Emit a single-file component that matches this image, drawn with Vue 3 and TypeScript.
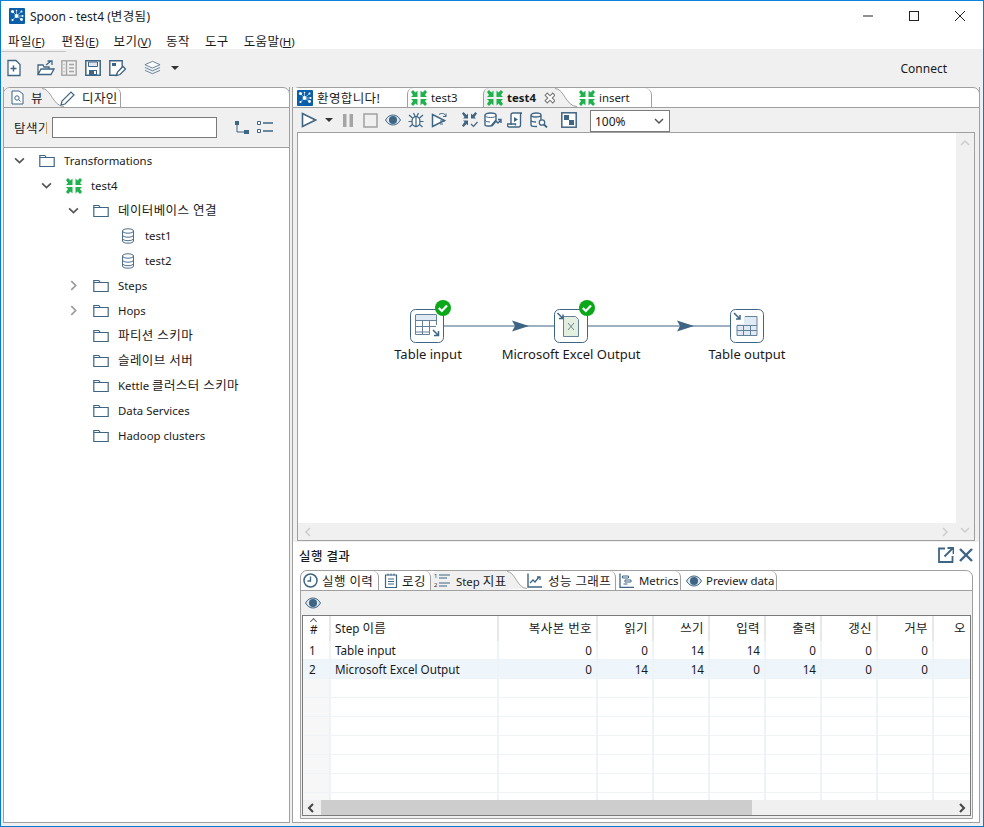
<script setup lang="ts">
interface TreeRow {
  label: string;
  depth: number;
  arrow?: "open" | "closed";
  icon: "folder" | "trans" | "db";
}

const menus = [
  { label: "파일", key: "F" },
  { label: "편집", key: "E" },
  { label: "보기", key: "V" },
  { label: "동작" },
  { label: "도구" },
  { label: "도움말", key: "H" },
];

const tree: TreeRow[] = [
  { label: "Transformations", depth: 0, arrow: "open", icon: "folder" },
  { label: "test4", depth: 1, arrow: "open", icon: "trans" },
  { label: "데이터베이스 연결", depth: 2, arrow: "open", icon: "folder" },
  { label: "test1", depth: 3, icon: "db" },
  { label: "test2", depth: 3, icon: "db" },
  { label: "Steps", depth: 2, arrow: "closed", icon: "folder" },
  { label: "Hops", depth: 2, arrow: "closed", icon: "folder" },
  { label: "파티션 스키마", depth: 2, icon: "folder" },
  { label: "슬레이브 서버", depth: 2, icon: "folder" },
  { label: "Kettle 클러스터 스키마", depth: 2, icon: "folder" },
  { label: "Data Services", depth: 2, icon: "folder" },
  { label: "Hadoop clusters", depth: 2, icon: "folder" },
];

const columns = ["복사본 번호", "읽기", "쓰기", "입력", "출력", "갱신", "거부", "오"];
const widths = [28, 168, 99, 56, 56, 56, 56, 56, 56, 38];
const rows = [
  { n: "1", name: "Table input", vals: ["0", "0", "14", "14", "0", "0", "0", ""] },
  { n: "2", name: "Microsoft Excel Output", vals: ["0", "14", "14", "0", "14", "0", "0", ""] },
];
const emptyRows = 7;

// hangul is set a bit larger than latin in the original ui font
const koParts = (s: string) => s.split(/([가-힣]+(?: [가-힣]+)*)/).filter(Boolean);
const isKo = (s: string) => /[가-힣]/.test(s);
</script>

<template>
  <div class="window">
    <svg class="defs" width="0" height="0">
      <defs>
        <symbol id="folder" viewBox="0 0 16 16">
          <path d="M.8 13.500V2.500h5l1.500 2h7.900v9z" fill="#fff" stroke="#3f6584" stroke-width="1.200" />
          <path d="M.8 4.500h6.500" fill="none" stroke="#3f6584" stroke-width="1" />
        </symbol>
        <symbol id="trans" viewBox="0 0 16 16">
          <g fill="#1fb14c">
            <path d="M0 2 2 0l2.500 2.500L6.500 .5v6.500H0l2-2z" />
            <path d="M16 2 14 0l-2.500 2.500L9.500 .5v6.500H16l-2-2z" />
            <path d="M0 14l2 2 2.500-2.500 2 2V9H0l2 2z" />
            <path d="M16 14l-2 2-2.500-2.500-2 2V9H16l-2 2z" />
          </g>
        </symbol>
        <symbol id="db" viewBox="0 0 16 16">
          <g fill="#fff" stroke="#4c6f8e" stroke-width="1">
            <path d="M2.500 3c0-1.300 2.500-2.200 5.500-2.200s5.500.9 5.500 2.200v10c0 1.300-2.500 2.200-5.500 2.200s-5.500-.9-5.500-2.200z" />
            <path d="M2.500 3c0 1.300 2.500 2.200 5.500 2.200s5.500-.9 5.500-2.200M2.500 7c0 1.300 2.500 2.200 5.500 2.200s5.500-.9 5.500-2.200M2.500 10.500c0 1.300 2.500 2.200 5.500 2.200s5.500-.9 5.500-2.200" fill="none" />
          </g>
        </symbol>
        <symbol id="logo" viewBox="0 0 16 16">
          <rect width="16" height="16" rx="1" fill="#0b5ea8" />
          <g stroke="#a9cbe8" stroke-width=".8">
            <path d="M7.500 8 3.500 3.500M7.500 8l5-4.500M7.500 8l-4 4M7.500 8l5 3.500M7.500 8h6M7.500 8V2.500" />
          </g>
          <g fill="#fff">
            <circle cx="7.500" cy="8" r="1.900" /><circle cx="3.500" cy="3.500" r="1.600" /><circle cx="12.500" cy="3.500" r="1" />
            <circle cx="13.500" cy="8" r="1" /><circle cx="3.500" cy="12" r="1.100" /><circle cx="12.500" cy="11.500" r="1.400" />
            <circle cx="7.500" cy="2.500" r=".8" />
          </g>
        </symbol>
        <symbol id="eye" viewBox="0 0 16 16">
          <path d="M.5 8C2.500 4.500 5 3 8 3s5.500 1.500 7.500 5c-2 3.500-4.500 5-7.500 5S2.500 11.500.5 8z" fill="#dfe7ee" stroke="#3f6584" />
          <circle cx="8" cy="8" r="4" fill="#3f6584" />
        </symbol>
        <symbol id="chev-down" viewBox="0 0 10 10">
          <path d="M1 3l4 4 4-4" fill="none" stroke="#555" stroke-width="1.500" />
        </symbol>
        <symbol id="chev-right" viewBox="0 0 10 10">
          <path d="M3 1l4 4-4 4" fill="none" stroke="#999" stroke-width="1.500" />
        </symbol>
        <symbol id="check" viewBox="0 0 16 16">
          <circle cx="8" cy="8" r="8" fill="#0aa818" />
          <path d="M3.800 8l3 3 5.200-5.500" fill="none" stroke="#fff" stroke-width="2.200" />
        </symbol>
      </defs>
    </svg>

    <header class="titlebar">
      <svg class="logo" width="16" height="16"><use href="#logo" /></svg>
      <span class="title">Spoon - test4 (<span class="ko">변경됨</span>)</span>
      <div class="winbtns">
        <svg width="46" height="29" viewBox="0 0 46 29"><path d="M18 15h10" stroke="#222" /></svg>
        <svg width="46" height="29" viewBox="0 0 46 29"><rect x="18.500" y="10.500" width="9" height="9" fill="none" stroke="#222" /></svg>
        <svg width="46" height="29" viewBox="0 0 46 29"><path d="M18 10l10 10M28 10 18 20" stroke="#222" /></svg>
      </div>
    </header>

    <nav class="menubar">
      <span v-for="m in menus" :key="m.label" class="menu"><span class="ko">{{ m.label }}</span><template v-if="m.key">(<u>{{ m.key }}</u>)</template></span>
    </nav>

    <div class="toolbar">
      <span class="menu-edge" />
      <svg width="14" height="18" viewBox="0 0 14 18" style="margin-left:6px">
        <path d="M1 1.500h8l4 4v11H1z" fill="#fff" stroke="#3f6584" stroke-width="1.300" />
        <path d="M3.500 9.500h6M6.500 6.500v6" stroke="#3f6584" stroke-width="1.500" />
      </svg>
      <svg width="18" height="16" viewBox="0 0 18 16" style="margin-left:16px">
        <path d="M1 14.500V5h5l1 2h5v2M1 14.500 4 9h13l-3 5.500z" fill="#fff" stroke="#3f6584" stroke-width="1.300" />
        <path d="M9 5l5-4M10.500 1H15v4" fill="none" stroke="#3f6584" stroke-width="1.300" />
      </svg>
      <svg width="16" height="16" viewBox="0 0 16 16" style="margin-left:6px">
        <rect x=".8" y=".8" width="14.400" height="14.400" fill="none" stroke="#a5a5a5" stroke-width="1.400" />
        <path d="M5.500 1v14M8 4.500h5M8 8h5M8 11.500h5M2.500 4.500h1M2.500 8h1M2.500 11.500h1" stroke="#a5a5a5" stroke-width="1.400" />
      </svg>
      <svg width="16" height="16" viewBox="0 0 16 16" style="margin-left:8px">
        <path d="M.8.8h14.400v14.400H.8z" fill="#fff" stroke="#3f6584" stroke-width="1.500" />
        <path d="M3.500 2h9v4.500h-9z" fill="#dfe7ee" stroke="#3f6584" />
        <path d="M4 10h8v5H4z" fill="#3f6584" />
        <path d="M9 11h2v3H9z" fill="#fff" />
      </svg>
      <svg width="17" height="17" viewBox="0 0 17 17" style="margin-left:8px">
        <path d="M.8.8h12.400v6l-6 8.400H.8z" fill="#fff" stroke="#3f6584" stroke-width="1.400" />
        <path d="M3 3h4v3H3z" fill="#3f6584" />
        <path d="M7.500 15.500l1-3.500 5.500-5.500 2.500 2.500-5.500 5.500z" fill="#fff" stroke="#3f6584" stroke-width="1.300" />
      </svg>
      <svg width="17" height="16" viewBox="0 0 18 16" style="margin-left:18px">
        <path d="M9 1l8 3.500L9 8 1 4.500z" fill="#fff" stroke="#5f7f9b" />
        <path d="M1 7.500 9 11l8-3.500M1 10.500 9 14l8-3.500" fill="none" stroke="#5f7f9b" />
      </svg>
      <span class="caret" />
      <span class="connect">Connect</span>
    </div>

    <div class="main">
      <aside class="left">
        <div class="tabstrip">
          <div class="tab tab-view">
            <svg width="13" height="15" viewBox="0 0 13 15">
              <path d="M1 1h7l4 3v10H1z" fill="#fff" stroke="#3f6584" />
              <circle cx="6" cy="8" r="2.200" fill="none" stroke="#3f6584" />
              <path d="M7.700 9.800 9.500 11.500" stroke="#3f6584" />
            </svg>
            <span class="ko">뷰</span>
          </div>
          <svg class="curve" width="22" height="19" viewBox="0 0 22 19">
            <path d="M0 0C9 0 11 18 22 18V19H0z" fill="#f0f0f0" />
            <path d="M0 .5C9 .5 11 18.500 22 18.500" fill="none" stroke="#a0a0a0" />
          </svg>
          <div class="tab tab-design">
            <svg width="16" height="16" viewBox="0 0 16 16">
              <path d="M1 15l1-4 9-9 3 3-9 9z" fill="#fff" stroke="#3f6584" stroke-width="1.200" />
            </svg>
            <span class="ko">디자인</span>
          </div>
        </div>
        <div class="search">
          <span class="search-label ko">탐색기</span>
          <input class="search-input" type="text" />
          <svg width="16" height="16" viewBox="0 0 16 16" class="s1">
            <path d="M3 5v7h8" fill="none" stroke="#3f6584" />
            <rect x="1" y="1" width="4" height="4" fill="#3f6584" /><rect x="10" y="10" width="5" height="4" fill="#3f6584" />
          </svg>
          <svg width="17" height="16" viewBox="0 0 17 16" class="s2">
            <path d="M1.500 1.500h3v3h-3zM1.500 9.500h3v3h-3z" fill="#fff" stroke="#3f6584" />
            <path d="M7 3h10M7 11h10" stroke="#3f6584" stroke-width="1.300" />
          </svg>
        </div>
        <div class="tree">
          <div
            v-for="t in tree"
            :key="t.label"
            class="tree-row"
            :style="{ paddingLeft: `${t.depth * 27 + 10}px` }"
          >
            <span class="arrow">
              <svg v-if="t.arrow === 'open'" width="11" height="11"><use href="#chev-down" /></svg>
              <svg v-if="t.arrow === 'closed'" width="11" height="11"><use href="#chev-right" /></svg>
            </span>
            <svg class="tree-icon" width="16" height="16"><use :href="`#${t.icon}`" /></svg>
            <span class="tree-label"><span v-for="p in koParts(t.label)" :key="p" :class="{ ko: isKo(p) }">{{ p }}</span></span>
          </div>
        </div>
      </aside>

      <section class="right">
        <div class="tabstrip graph-tabs">
          <div class="gtab g-welcome">
            <svg width="16" height="16"><use href="#logo" /></svg><span class="ko">환영합니다!</span>
          </div>
          <div class="gtab g-test3">
            <svg width="16" height="16"><use href="#trans" /></svg><span>test3</span>
          </div>
          <div class="gtab g-test4">
            <svg width="16" height="16"><use href="#trans" /></svg><b>test4</b>
            <svg class="close" width="12" height="12" viewBox="0 0 11 11">
              <path d="M1 3l2-2 2.500 2.500L8 1l2 2-2.500 2.500L10 8l-2 2-2.500-2.500L3 10 1 8l2.500-2.500z" fill="#fff" stroke="#777" />
            </svg>
          </div>
          <svg class="curve" width="22" height="19" viewBox="0 0 22 19">
            <path d="M0 0C9 0 11 18 22 18V19H0z" fill="#f0f0f0" />
            <path d="M0 .5C9 .5 11 18.500 22 18.500" fill="none" stroke="#a0a0a0" />
          </svg>
          <div class="gtab g-insert">
            <svg width="16" height="16"><use href="#trans" /></svg><span>insert</span>
          </div>
        </div>

        <div class="gtoolbar">
          <svg width="16" height="16" viewBox="0 0 16 16" style="margin-left:8px">
            <path d="M1.500 1.500v13l13-6.500z" fill="#fff" stroke="#3f6584" stroke-width="1.600" />
          </svg>
          <span class="caret small" />
          <svg width="12" height="15" viewBox="0 0 12 15" style="margin-left:9px">
            <path d="M1 1h3.500v13H1zM7.500 1H11v13H7.500z" fill="#a5a5a5" />
          </svg>
          <svg width="15" height="15" viewBox="0 0 15 15" style="margin-left:9px">
            <rect x="1" y="1" width="13" height="13" fill="none" stroke="#a5a5a5" stroke-width="1.600" />
          </svg>
          <svg width="16" height="16" style="margin-left:7px"><use href="#eye" /></svg>
          <svg width="16" height="16" viewBox="0 0 16 16" style="margin-left:7px">
            <ellipse cx="8" cy="9.500" rx="4" ry="5" fill="#fff" stroke="#3f6584" stroke-width="1.300" />
            <path d="M8 5v9M1 3l3.500 3M15 3l-3.500 3M.5 9.500H4M15.500 9.500H12M1.500 15l3-2.500M14.500 15l-3-2.500M5.500 1 7 4M10.500 1 9 4" stroke="#3f6584" stroke-width="1.200" />
          </svg>
          <svg width="17" height="16" viewBox="0 0 17 16" style="margin-left:7px">
            <path d="M1.500 2.500v12l12-6z" fill="#fff" stroke="#3f6584" stroke-width="1.500" />
            <path d="M8 2.500c3-2 6-1 7 2M15 1.500v3h-3M9 9h5M9 12h3" fill="none" stroke="#3f6584" />
          </svg>
          <svg width="16" height="16" viewBox="0 0 16 16" style="margin-left:14px">
            <g fill="#3f6584">
              <path d="M0 1.500 1.500 0l3 3L6 1.500V6.500H1L2.500 5z" /><path d="M15 1.500 13.500 0l-3 3L9 1.500V6.500h5L12.500 5z" />
              <path d="M0 13.500 1.500 15l3-3L6 13.500V8.500H1L2.500 10z" />
            </g>
            <path d="M9 12l2.500 2.500L15.500 10" fill="none" stroke="#3f6584" stroke-width="1.200" />
          </svg>
          <svg width="18" height="16" viewBox="0 0 18 16" style="margin-left:6px">
            <path d="M1 3c0-1.200 2.500-2 5.500-2s5.500.8 5.500 2v5l-5 6H3.500C2 14 1 13.500 1 13z" fill="#fff" stroke="#3f6584" stroke-width="1.400" />
            <path d="M1 3.500c0 1.200 2.500 2 5.500 2S12 4.700 12 3.500M1 8c0 1 2 2 5 2" fill="none" stroke="#3f6584" />
            <path d="M8 14l4-5 2 2 3-3M14 7.500h3V11" fill="none" stroke="#3f6584" stroke-width="1.400" />
          </svg>
          <svg width="17" height="16" viewBox="0 0 17 16" style="margin-left:5px">
            <path d="M4 13V3c0-1.200.8-2 2-2h9c-1 0-1.500.8-1.500 2v10c0 1.200-.8 2-2 2H2c-.8 0-1.500-.7-1.500-1.500V12h8v1.500" fill="#fff" stroke="#3f6584" stroke-width="1.400" />
            <path d="M7 5v5l4-2.500z" fill="#3f6584" />
          </svg>
          <svg width="18" height="16" viewBox="0 0 18 16" style="margin-left:6px">
            <path d="M1 3c0-1.200 2.500-2 5-2s5 .8 5 2v5M1 3v10c0 .8 2 1.500 5 1.500h1M1 3c0 1.200 2.500 2 5 2s5-.8 5-2M1 8c0 1 2 2 5 2" fill="#fff" stroke="#3f6584" stroke-width="1.400" />
            <circle cx="12" cy="10.500" r="2.700" fill="#fff" stroke="#3f6584" stroke-width="1.300" />
            <path d="M14 12.500l3 3" stroke="#3f6584" stroke-width="1.800" />
          </svg>
          <svg width="16" height="16" viewBox="0 0 16 16" style="margin-left:13px">
            <rect x=".8" y=".8" width="14.400" height="14.400" fill="#fff" stroke="#3f6584" stroke-width="1.500" />
            <path d="M3 3h5v5H3z" fill="#3f6584" /><path d="M8 8h5v5H8z" fill="#3f6584" />
          </svg>
          <div class="zoom-select">
            <span>100%</span>
            <svg width="10" height="10"><use href="#chev-down" /></svg>
          </div>
        </div>

        <div class="graph">
          <div class="canvas">
            <svg class="hops" width="660" height="391">
              <path d="M140 193H440" stroke="#3f6584" stroke-width="1.200" />
              <path d="M214 187.500l17 5.500-17 5.500 3-5.500z M379 187.500l17 5.500-17 5.500 3-5.500z" fill="#3f6584" />
            </svg>

            <div class="step" style="left: 112px; top: 176px">
              <svg width="34" height="34" viewBox="0 0 34 34">
                <rect x=".5" y=".5" width="33" height="33" rx="5" fill="#fff" stroke="#3f6584" />
                <path d="M6 6h21v6H6z" fill="#dfeaf5" />
                <path d="M26.500 6v10M6 5.500h20.500M5.500 5.500v20h14M6 11.500h20.500M6 17.500h20M6 23h14M12.500 12v13.500M19.500 12v13.500" fill="none" stroke="#64819a" />
                <path d="M23 21l5.500 5.500M28.500 22v4.500H24" fill="none" stroke="#3f6584" stroke-width="1.500" />
              </svg>
            </div>
            <svg class="badge" style="left: 137px; top: 167px" width="16" height="16"><use href="#check" /></svg>
            <span class="step-name" style="left: 95px; width: 70px">Table input</span>

            <div class="step" style="left: 256px; top: 176px">
              <svg width="34" height="34" viewBox="0 0 34 34">
                <rect x=".5" y=".5" width="33" height="33" rx="5" fill="#fff" stroke="#3f6584" />
                <path d="M9.500 7.500h12l3 3v17h-15z" fill="#e3f0df" stroke="#64819a" />
                <path d="M14 14l6 7M20 14l-6 7" stroke="#6f8290" />
                <path d="M3.500 4 9 9.500M9 5.500v4H5" fill="none" stroke="#3f6584" stroke-width="1.500" />
              </svg>
            </div>
            <svg class="badge" style="left: 281px; top: 167px" width="16" height="16"><use href="#check" /></svg>
            <span class="step-name" style="left: 199px; width: 148px">Microsoft Excel Output</span>

            <div class="step" style="left: 432px; top: 176px">
              <svg width="34" height="34" viewBox="0 0 34 34">
                <rect x=".5" y=".5" width="33" height="33" rx="5" fill="#fff" stroke="#3f6584" />
                <path d="M14 7h13v20H7V15h7z" fill="#dfeaf5" />
                <path d="M15 7.500h12v19H7v-10M7 16.500h20M7 21.500h20M13.500 16.500v10M20.500 16.500v10" fill="none" stroke="#64819a" />
                <path d="M4 4l6 6M10 6v4H6" fill="none" stroke="#3f6584" stroke-width="1.500" />
              </svg>
            </div>
            <span class="step-name" style="left: 409px; width: 80px">Table output</span>
          </div>
          <div class="vscroll">
            <svg width="10" height="10" viewBox="0 0 10 10"><path d="M1 7l4-4 4 4" fill="none" stroke="#ccc" stroke-width="1.500" /></svg>
            <svg width="10" height="10" viewBox="0 0 10 10"><path d="M1 3l4 4 4-4" fill="none" stroke="#ccc" stroke-width="1.500" /></svg>
          </div>
          <div class="hscroll">
            <svg width="10" height="10" viewBox="0 0 10 10"><path d="M7 1 3 5l4 4" fill="none" stroke="#ccc" stroke-width="1.500" /></svg>
            <svg width="10" height="10" viewBox="0 0 10 10"><path d="M3 1l4 4-4 4" fill="none" stroke="#ccc" stroke-width="1.500" /></svg>
          </div>
        </div>

        <div class="results">
          <div class="results-head">
            <span class="results-title ko">실행 결과</span>
            <svg width="16" height="16" viewBox="0 0 16 16">
              <path d="M7 1.500H1v13.500h13.500V9" fill="none" stroke="#3f6584" stroke-width="1.800" />
              <path d="M6.500 9.500 15 1M9.500 1H15.500V7" fill="none" stroke="#3f6584" stroke-width="1.800" />
            </svg>
            <svg class="x" width="14" height="14" viewBox="0 0 14 14">
              <path d="M1 1l12 12M13 1 1 13" stroke="#3f6584" stroke-width="2.400" />
            </svg>
          </div>

          <div class="rfolder">
            <div class="rtabs">
              <div class="rtab r-history">
                <svg width="15" height="15" viewBox="0 0 15 15"><circle cx="7.500" cy="7.500" r="6.500" fill="#fff" stroke="#3f6584" stroke-width="1.500" /><path d="M7.500 3.500v4.500H4.500" fill="none" stroke="#3f6584" stroke-width="1.300" /></svg>
                <span class="ko">실행 이력</span>
              </div>
              <div class="rtab r-log">
                <svg width="14" height="15" viewBox="0 0 14 15"><path d="M1.500 2h11v12.500h-11z" fill="#fff" stroke="#3f6584" stroke-width="1.200" /><path d="M4 .5v2M7 .5v2M10 .5v2M4 6h6M4 8.500h6M4 11h6" stroke="#3f6584" /></svg>
                <span class="ko">로깅</span>
              </div>
              <div class="rtab active">
                <svg width="17" height="15" viewBox="0 0 17 15"><path d="M5 2h11M5 5h8M5 10h11M5 13h8" stroke="#3f6584" /><text x="0" y="5" font-size="6" fill="#333">1</text><text x="0" y="14" font-size="6" fill="#333">2</text></svg>
                <span>Step <span class="ko">지표</span></span>
              </div>
              <svg class="curve" width="20" height="18" viewBox="0 0 22 19" preserveAspectRatio="none">
                <path d="M0 0C9 0 11 18 22 18V19H0z" fill="#f0f0f0" />
                <path d="M0 .5C9 .5 11 18.500 22 18.500" fill="none" stroke="#a0a0a0" />
              </svg>
              <div class="rtab r-perf">
                <svg width="15" height="15" viewBox="0 0 15 15"><path d="M1 .5v13.500h14" fill="none" stroke="#3f6584" stroke-width="1.400" /><path d="M3 10l3-3 2 2 4-5M10 4h3v3" fill="none" stroke="#3f6584" stroke-width="1.300" /></svg>
                <span class="ko">성능 그래프</span>
              </div>
              <div class="rtab r-metrics">
                <svg width="15" height="15" viewBox="0 0 15 15"><path d="M1 .5v14h14" fill="none" stroke="#3f6584" stroke-width="1.300" /><path d="M3.500 3h6v2h-6zM6 7h6v2H6zM4.500 11h4" fill="#fff" stroke="#3f6584" /></svg>
                <span>Metrics</span>
              </div>
              <div class="rtab r-preview">
                <svg width="16" height="16"><use href="#eye" /></svg>
                <span>Preview data</span>
              </div>
            </div>
            <div class="rtoolbar">
              <svg width="16" height="16"><use href="#eye" /></svg>
            </div>
            <div class="grid">
              <div class="grid-inner">
                <table>
                  <colgroup><col v-for="(w, i) in widths" :key="i" :style="{ width: `${w}px` }" /></colgroup>
                  <thead>
                    <tr>
                      <th class="num-head"><span class="sort" />#</th>
                      <th class="name">Step <span class="ko">이름</span></th>
                      <th v-for="c in columns" :key="c"><span class="ko">{{ c }}</span></th>
                    </tr>
                  </thead>
                  <tbody>
                    <tr v-for="(r, i) in rows" :key="r.n" :class="{ alt: i === 1 }">
                      <td class="num">{{ r.n }}</td>
                      <td class="name">{{ r.name }}</td>
                      <td v-for="(v, j) in r.vals" :key="j">{{ v }}</td>
                    </tr>
                    <tr v-for="e in emptyRows" :key="`e${e}`" class="empty">
                      <td class="num" /><td /><td /><td /><td /><td /><td /><td /><td /><td />
                    </tr>
                  </tbody>
                </table>
              </div>
              <div class="grid-scroll">
                <svg width="12" height="12" viewBox="0 0 12 12"><path d="M8 2 4 6l4 4" fill="none" stroke="#444" stroke-width="2" /></svg>
                <div class="track"><div class="thumb" /></div>
                <svg width="12" height="12" viewBox="0 0 12 12"><path d="M4 2l4 4-4 4" fill="none" stroke="#444" stroke-width="2" /></svg>
              </div>
            </div>
          </div>
        </div>
      </section>
    </div>
  </div>
</template>

<style>
html,
body {
  margin: 0;
  background: #f0f0f0;
}
</style>

<style scoped>
* {
  box-sizing: border-box;
}
.window {
  width: 984px;
  height: 827px;
  border: 1px solid #0a7ad1;
  border-top-color: #0a84dc;
  background: #f0f0f0;
  display: flex;
  flex-direction: column;
  font-family: "Noto Sans", "Noto Sans CJK KR", sans-serif;
  font-size: 11.4px;
  color: #1a1a1a;
  overflow: hidden;
}
.ko {
  font-size: 12.5px;
  letter-spacing: 0.4px;
}
.defs {
  position: absolute;
}
svg {
  flex: none;
  display: block;
}

.titlebar {
  height: 29px;
  background: #fff;
  display: flex;
  align-items: center;
  flex: none;
}
.logo {
  margin-left: 8px;
}
.title {
  margin-left: 5px;
  font-size: 12px;
}
.winbtns {
  margin-left: auto;
  display: flex;
}

.menubar {
  height: 19px;
  background: #fff;
  display: flex;
  align-items: center;
  gap: 15px;
  padding: 2px 0 0 7px;
  flex: none;
}
.menu:first-child {
  margin-right: 2px;
}
.toolbar {
  height: 36px;
  display: flex;
  align-items: center;
  flex: none;
  position: relative;
  background: #f0f0f0;
  padding-top: 2px;
}
.menu-edge {
  position: absolute;
  left: 0;
  top: 2px;
  width: 65px;
  height: 1px;
  background: #c4c4c4;
}
.caret {
  width: 0;
  height: 0;
  border: 4px solid transparent;
  border-top: 4px solid #333;
  border-bottom: 0;
  margin-left: 10px;
}
.caret.small {
  margin-left: 8px;
}
.connect {
  margin-left: auto;
  margin-right: 36px;
  font-size: 12px;
}

.main {
  flex: 1;
  display: flex;
  gap: 2px;
  padding: 2px 3px 3px 2px;
  min-height: 0;
}
.left {
  width: 287px;
  flex: none;
  border: 1px solid #a0a0a0;
  border-top: 0;
  display: flex;
  flex-direction: column;
  background: #f0f0f0;
}
.tabstrip {
  height: 21px;
  display: flex;
  background: #fff;
  border: 1px solid #a0a0a0;
  border-radius: 7px 7px 0 0;
  flex: none;
  margin: 0 0 0 -1px;
  width: calc(100% + 2px);
}
.curve {
  margin-right: -22px;
  position: relative;
  z-index: 1;
}
.tab {
  display: flex;
  align-items: center;
  gap: 7px;
  height: 19px;
}
.tab-view {
  width: 38px;
  padding-left: 7px;
  background: #f0f0f0;
  border-radius: 6px 0 0 0;
}
.tab-design {
  margin-left: 18px;
  padding-left: 0;
  padding-right: 2px;
  border-right: 1px solid #a0a0a0;
  border-radius: 0 6px 0 0;
  gap: 6px;
  position: relative;
  z-index: 2;
}
.search {
  height: 40px;
  display: flex;
  align-items: center;
  padding-left: 10px;
  border-bottom: 1px solid #a0a0a0;
  flex: none;
}
.search-label {
  width: 33px;
  margin-right: 5px;
  overflow: hidden;
  white-space: nowrap;
  flex: none;
}
.search-input {
  width: 165px;
  height: 21px;
  border: 1px solid #7a7a7a;
  background: #fff;
  padding: 0;
  flex: none;
}
.s1 {
  margin-left: 17px;
}
.s2 {
  margin-left: 6px;
}
.tree {
  flex: 1;
  background: #fff;
}
.tree-row {
  height: 25px;
  display: flex;
  align-items: center;
}
.arrow {
  width: 11px;
  height: 11px;
  flex: none;
}
.tree-icon {
  margin-left: 14px;
  margin-right: 9px;
}
.tree-label {
  line-height: 16px;
}

.right {
  flex: 1;
  min-width: 0;
  display: flex;
  flex-direction: column;
  border: 1px solid #a0a0a0;
  border-top: 0;
  min-height: 0;
}
.graph-tabs {
  align-items: stretch;
}
.gtab {
  display: flex;
  align-items: center;
  gap: 4px;
  height: 19px;
  border-right: 1px solid #a0a0a0;
  border-radius: 0 7px 0 0;
}
.gtab svg {
  margin-left: 3px;
}
.g-welcome {
  width: 114px;
  border-right: 0;
  background: #fff;
}
.g-welcome svg {
  margin-left: 4px;
}
.g-test3 {
  width: 76px;
  border-left: 1px solid #a0a0a0;
  border-radius: 6px 0 0 0;
  border-right: 0;
}
.g-test4 {
  width: 72px;
  background: #f0f0f0;
  border-left: 1px solid #a0a0a0;
  border-right: 0;
  border-radius: 6px 0 0 0;
}
.g-test4 .close {
  margin-left: 4px;
}
.g-insert {
  width: 76px;
  margin-left: 21px;
  padding-left: 0;
  position: relative;
  z-index: 2;
}
.gtoolbar {
  height: 24px;
  display: flex;
  align-items: center;
  flex: none;
}
.zoom-select {
  margin-left: 13px;
  margin-top: 2px;
  width: 80px;
  height: 22px;
  background: #fff;
  border: 1px solid #7a7a7a;
  display: flex;
  align-items: center;
  justify-content: space-between;
  padding: 0 5px 0 4px;
  font-size: 12px;
}
.graph {
  height: 409px;
  margin: 0 4px;
  border: 1px solid #a0a0a0;
  display: grid;
  grid-template-columns: 1fr 18px;
  grid-template-rows: 1fr 17px;
  flex: none;
}
.canvas {
  position: relative;
  background: #fff;
  overflow: hidden;
}
.hops {
  position: absolute;
  left: 0;
  top: 0;
}
.step {
  position: absolute;
}
.badge {
  position: absolute;
}
.step-name {
  position: absolute;
  top: 212px;
  text-align: center;
  white-space: nowrap;
  font-size: 13px;
  line-height: 18px;
}
.vscroll {
  grid-row: 1 / 3;
  grid-column: 2;
  display: flex;
  flex-direction: column;
  justify-content: space-between;
  align-items: center;
  padding: 5px 0;
}
.hscroll {
  display: flex;
  align-items: center;
  justify-content: space-between;
  padding: 0 6px 0 5px;
}

.results {
  flex: 1;
  min-height: 0;
  display: flex;
  flex-direction: column;
  background: #fff;
  margin: 1px 0 0;
  padding: 0 6px 3px 6px;
}
.results-head {
  height: 28px;
  display: flex;
  align-items: center;
  flex: none;
  padding-bottom: 3px;
}
.results-title {
  margin-right: auto;
  margin-top: 1px;
  font-weight: 500;
}
.results-head .x {
  margin-left: 5px;
  margin-right: 0;
}
.rfolder {
  flex: 1;
  min-height: 0;
  border: 1px solid #a0a0a0;
  border-radius: 7px 7px 0 0;
  display: flex;
  flex-direction: column;
  background: #f0f0f0;
  padding: 0 1px 1px 1px;
  margin-left: 1px;
}
.rtabs {
  height: 20px;
  display: flex;
  background: #fff;
  border-bottom: 1px solid #a0a0a0;
  margin: 0 -1px;
  border-radius: 7px 7px 0 0;
  flex: none;
}
.rtab {
  display: flex;
  align-items: center;
  gap: 4px;
  padding: 0 0 0 2px;
  border-right: 1px solid #a0a0a0;
  border-radius: 0 6px 0 0;
  white-space: nowrap;
  position: relative;
  z-index: 2;
}
.r-history {
  width: 78px;
}
.r-log {
  width: 52px;
  padding-left: 5px;
  gap: 4px;
}
.rtab.active {
  width: 76px;
  background: #f0f0f0;
  border-right: 0;
  border-radius: 6px 0 0 0;
  z-index: 0;
  padding-left: 3px;
  gap: 5px;
}
.rtab.r-perf {
  width: 89px;
  margin-left: 22px;
  padding-left: 0;
  gap: 6px;
}
.r-metrics {
  width: 65px;
  padding-left: 3px;
  gap: 5px;
}
.r-preview {
  width: 96px;
  padding-left: 5px;
}
.rtoolbar {
  height: 24px;
  display: flex;
  align-items: center;
  padding-left: 3px;
  flex: none;
}
.grid {
  flex: 1;
  min-height: 0;
  border: 1px solid #7a7a7a;
  background: #fff;
  margin-bottom: 1px;
  display: flex;
  flex-direction: column;
}
.grid-inner {
  flex: 1;
  min-height: 0;
  overflow: hidden;
}
table {
  border-collapse: separate;
  border-spacing: 0;
  table-layout: fixed;
  width: 669px;
}
th,
td {
  padding: 0 4px;
  font-weight: 400;
  text-align: right;
  height: 19px;
  border-right: 2px solid #eef3f8;
  border-bottom: 1px solid #eef3f8;
  white-space: nowrap;
  overflow: hidden;
  font-size: 11.7px;
}
th {
  height: 25px;
  border-bottom: 0;
  border-right-color: #e8e8e8;
  padding-bottom: 3px;
}
.name {
  text-align: left;
}
.num,
.num-head {
  text-align: left;
  padding-left: 6px;
}
.empty .num {
  background: #f7f7f7;
}
.num-head {
  background: #fff;
  position: relative;
  padding-left: 7px;
  padding-top: 3px;
  padding-bottom: 2px;
}
.sort {
  position: absolute;
  left: 8px;
  top: 3px;
  width: 5px;
  height: 5px;
  border-left: 1px solid #666;
  border-top: 1px solid #666;
  transform: rotate(45deg);
}
.alt td {
  background: #eef6fc;
}
.grid-scroll {
  height: 15px;
  display: flex;
  align-items: center;
  background: #f0f0f0;
  padding: 0 2px 0 2px;
  flex: none;
}
.track {
  flex: 1;
  height: 15px;
  margin: 0 3px 0 4px;
}
.thumb {
  width: 431px;
  height: 15px;
  background: #cdcdcd;
}
</style>
